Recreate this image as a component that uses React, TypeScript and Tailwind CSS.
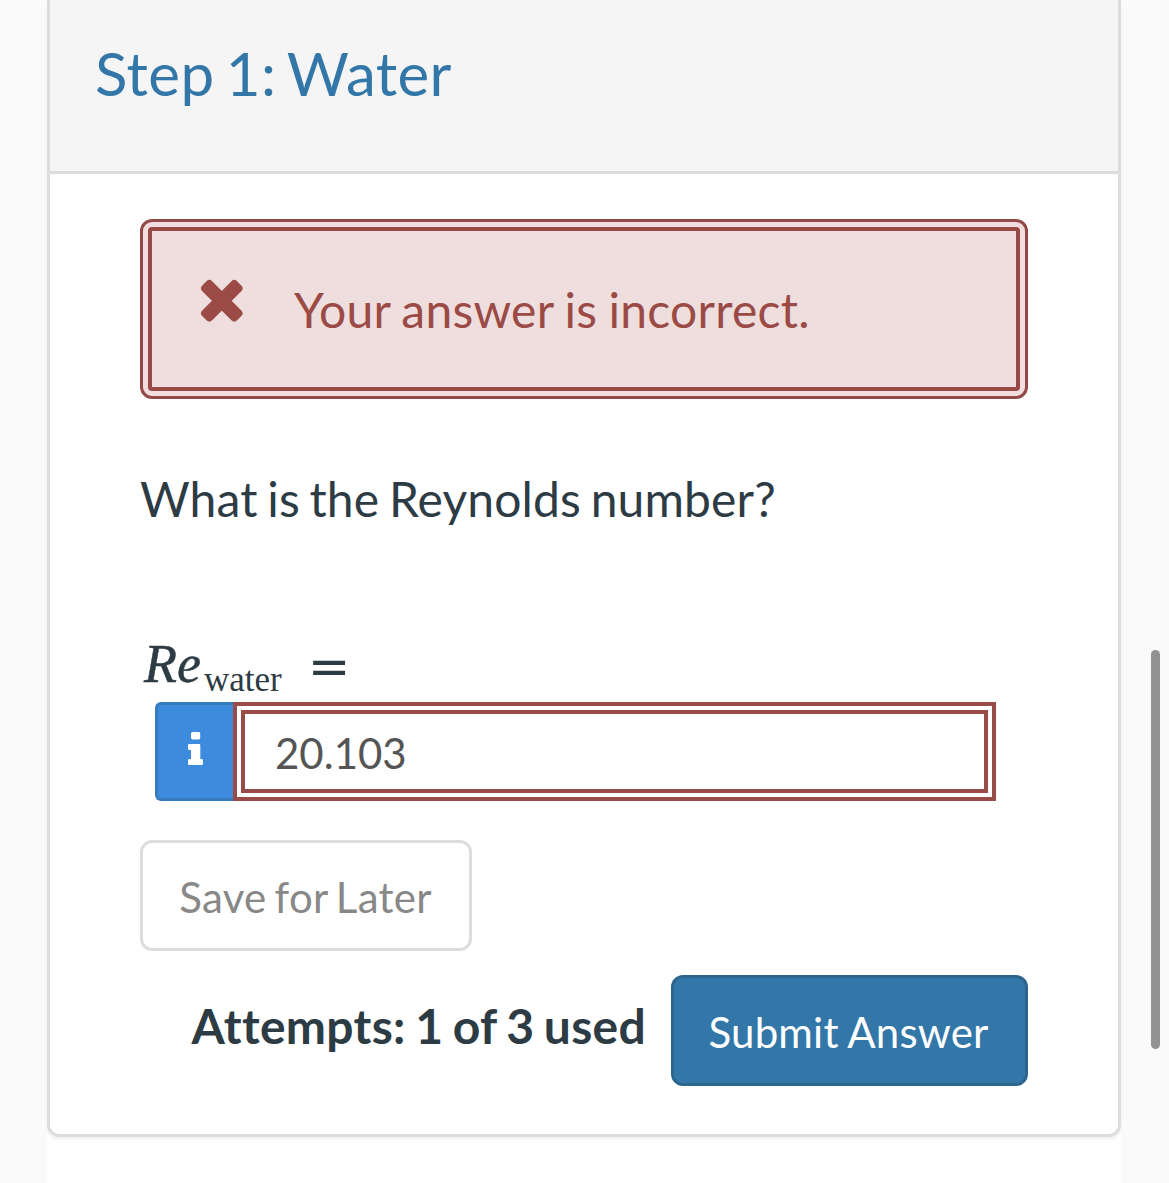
import React from "react";

function CrossIcon() {
  return (
    <svg className="h-[44px] w-[44px]" viewBox="-22 -22 44 44" fill="#9c4a45">
      <rect x="-24.6" y="-7" width="49.2" height="14" rx="4" transform="translate(-.2 -.2) rotate(45)" />
      <rect x="-24.6" y="-7" width="49.2" height="14" rx="4" transform="translate(-.2 -.2) rotate(-45)" />
    </svg>
  );
}

function InfoIcon() {
  return (
    <svg className="mb-[6px] h-[34px] w-[16px]" viewBox="0 0 16 34" fill="#fff">
      <rect x="3" y="0" width="9.2" height="7.4" rx="1.6" />
      <path d="M1.3 12H11a1.3 1.3 0 0 1 1.3 1.3V27h1.4a1.3 1.3 0 0 1 1.3 1.3v3.4a1.3 1.3 0 0 1-1.3 1.3H1.3A1.3 1.3 0 0 1 0 31.7v-3.4A1.3 1.3 0 0 1 1.3 27h1.7v-9H1.3A1.3 1.3 0 0 1 0 16.7v-3.4A1.3 1.3 0 0 1 1.3 12z" />
    </svg>
  );
}

export default function App() {
  return (
    <div className="relative h-[1183px] w-[1169px] overflow-hidden bg-[#fafafa] font-['Lato',sans-serif] text-[48px] leading-[58px] text-[#2d3b45] [font-variant-ligatures:none]">
      <main className="ml-[47px] h-full w-[1074px] bg-white">
        <section className="h-[1137px] rounded-b-[12px] border-x-[3px] border-b-[3px] border-[#dddddd] bg-white shadow-[0_3px_3px_rgba(0,0,0,0.05)]">
          <header className="h-[174px] border-b-[3px] border-[#dddddd] bg-[#f5f5f5] pt-[37px] pl-[45px]">
            <h2 className="text-[60px] leading-[72px] tracking-[0.4px] text-[#3277a8] [word-spacing:-4.5px]">
              Step 1: Water
            </h2>
          </header>

          <div className="px-[90px] pt-[45px]">
            <div className="h-[180px] rounded-[12px] border-[3px] border-[#944b48] bg-[#f2dede] p-[5px]">
              <div className="flex h-full items-start rounded-[4px] border-4 border-[#984945] bg-[#eedede] pl-[48px] text-[#9b4a46]">
                <div className="mt-[48px]">
                  <CrossIcon />
                </div>
                <p className="mt-[50px] ml-[50px] tracking-[0.25px] whitespace-nowrap [word-spacing:-1.4px]">
                  Your answer is incorrect.
                </p>
              </div>
            </div>

            <p className="mt-[71px] tracking-[0.13px] whitespace-nowrap [word-spacing:-2.7px]">
              What is the Reynolds number?
            </p>

            <div className="mt-[100px] flex h-[74px] items-baseline pl-[4px] font-['Liberation_Serif',serif] whitespace-nowrap">
              <span className="text-[54px] leading-[72px] italic [-webkit-text-stroke:0.5px_#2d3b45]">Re</span>
              <span className="relative top-[9px] ml-[3px] text-[35px] leading-none">water</span>
              <span className="relative top-[2px] ml-[26px] font-['DejaVu_Sans',sans-serif] text-[51px] leading-none">=</span>
            </div>

            <div className="ml-[15px] flex h-[99px] w-[841px]">
              <div className="flex w-[78px] items-center justify-center rounded-l-[6px] border-y-[3px] border-l-[3px] border-[#377bbf] bg-[#3d8bdc]">
                <InfoIcon />
              </div>
              <input
                className="min-w-0 flex-1 border-[12px] border-double border-[#984b47] bg-white px-[30px] pt-[2px] text-[42px] text-[#555555] outline-none"
                defaultValue="20.103"
              />
            </div>

            <button className="mt-[39px] flex h-[111px] w-[332px] items-center justify-center rounded-[12px] border-[3px] border-[#dddddd] bg-white pt-[2px] pr-[1px] text-[42px] tracking-[0.3px] whitespace-nowrap text-[#888888] [word-spacing:-3px]">
              Save for Later
            </button>

            <div className="mt-[24px] flex justify-end">
              <strong className="mt-[22px] mr-[25px] font-bold tracking-[0.3px] whitespace-nowrap [word-spacing:-2.5px]">
                Attempts: 1 of 3 used
              </strong>
              <button className="flex h-[111px] w-[357px] items-center justify-center rounded-[12px] border-[3px] border-[#2c668f] bg-[#3277a8] pt-[2px] pr-[2px] text-[42px] tracking-[0.2px] whitespace-nowrap text-white [word-spacing:-1px]">
                Submit Answer
              </button>
            </div>
          </div>
        </section>
      </main>
      <div className="absolute top-[650px] left-[1151px] h-[399px] w-[9px] rounded-full bg-[#929292]" />
    </div>
  );
}
